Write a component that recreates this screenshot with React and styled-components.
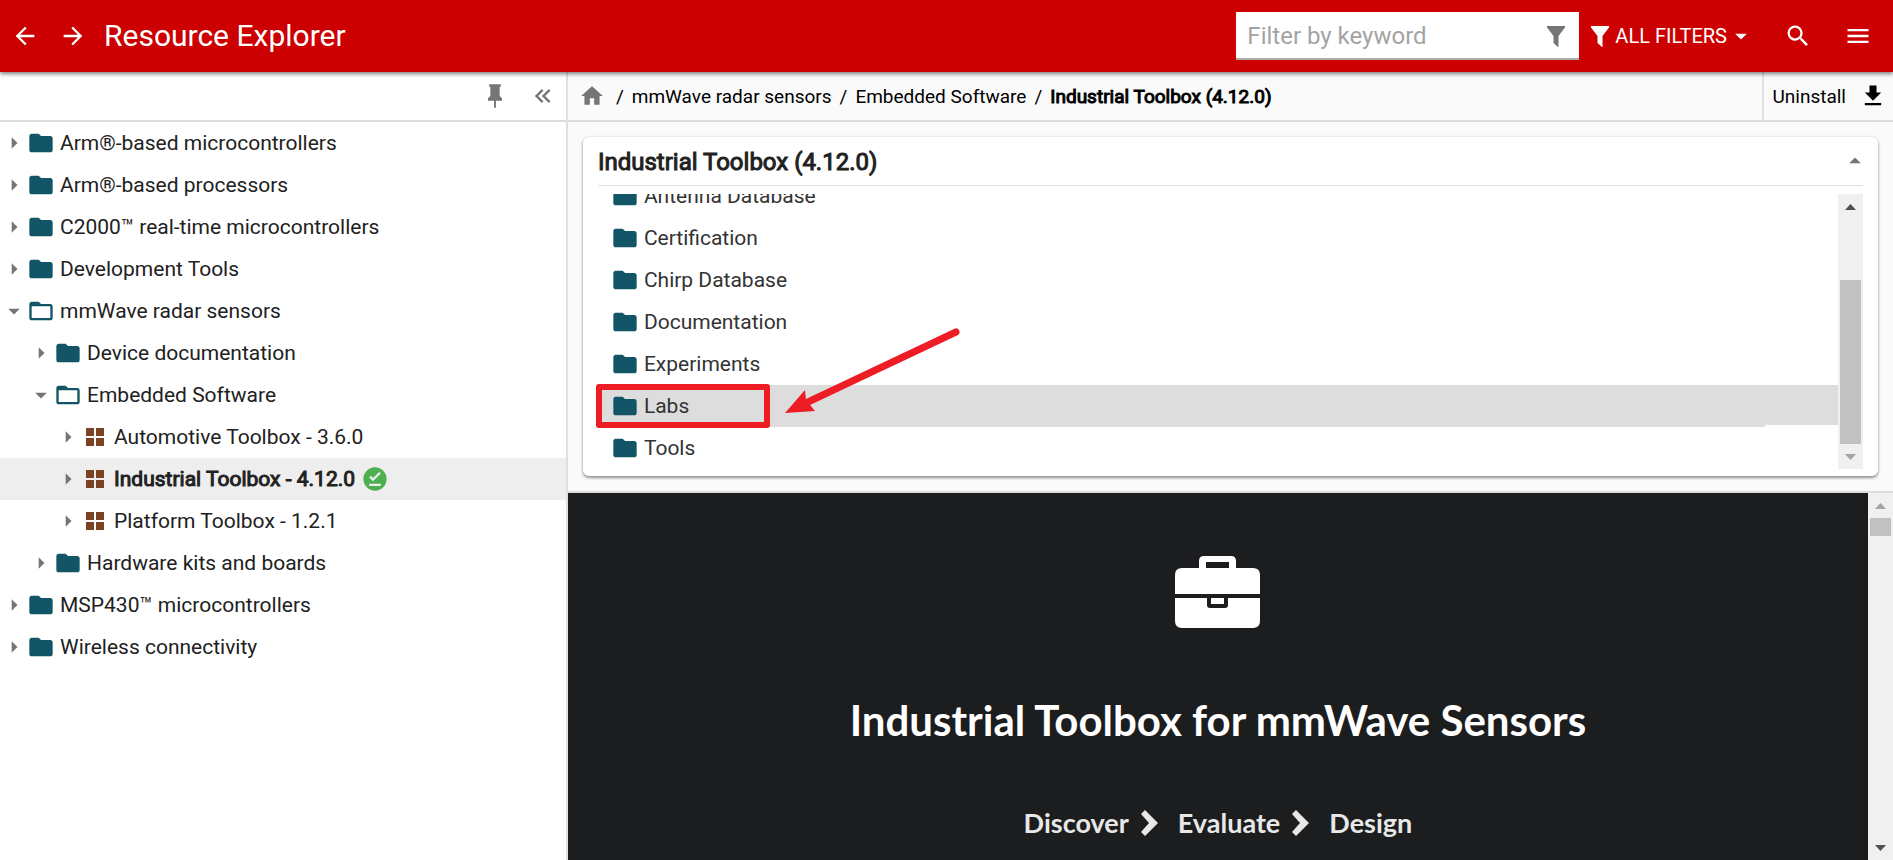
import React from 'react';
import styled, { createGlobalStyle, css } from 'styled-components';
import { MdArrowBack, MdArrowForward, MdSearch, MdMenu, MdHome, MdFileDownload, MdFolder, MdFolderOpen, MdOfflinePin, MdArrowDropDown, MdArrowDropUp, MdArrowRight } from 'react-icons/md';

const GlobalStyle = createGlobalStyle`
  * { box-sizing: border-box; }
  body { margin: 0; font-family: Roboto, sans-serif; font-size: 21px; color: #212121; background: #fff; }
  button, input { font: inherit; color: inherit; }
  h1, h2, p, ul, ol { margin: 0; padding: 0; }
  ul, ol { list-style: none; }
`;

const strong = css`
  font-weight: 400;
  -webkit-text-stroke: 1px currentColor;
`;

const Page = styled.div`
  height: 100vh;
  display: flex;
  flex-direction: column;
  overflow: hidden;
`;

const Header = styled.header`
  position: relative;
  z-index: 2;
  flex: none;
  display: flex;
  align-items: center;
  height: 72px;
  padding: 0 21px 0 11px;
  background: #c00;
  color: #fff;
  box-shadow: 0 2px 4px rgba(0, 0, 0, 0.5);
`;

const IconButton = styled.button`
  display: flex;
  flex: none;
  padding: 0;
  border: 0;
  background: none;
  cursor: pointer;
  svg { width: 28px; height: 28px; }
`;

const NavButtons = styled.div`
  display: flex;
  gap: 20px;
`;

const AppTitle = styled.h1`
  flex: 1;
  padding-left: 17px;
  font-size: 30px;
  line-height: 36px;
  font-weight: 400;
`;

const SearchField = styled.label`
  display: flex;
  align-items: center;
  width: 343px;
  height: 48px;
  padding: 2px 14px 0 11px;
  background: #fff;
  border-bottom: 2px solid #aaa;
  color: #757575;
`;

const SearchInput = styled.input`
  flex: 1;
  min-width: 0;
  padding: 0;
  border: 0;
  outline: 0;
  background: none;
  font-size: 24px;
  &::placeholder { color: #a3a3a3; opacity: 1; }
`;

const FilterButton = styled.button`
  display: flex;
  align-items: center;
  margin: 0 29px 0 12px;
  padding: 0;
  border: 0;
  background: none;
  font-size: 20px;
  line-height: 24px;
  svg:first-child { margin-right: 6px; }
`;

const Tools = styled.div`
  display: flex;
  gap: 32px;
`;

const Body = styled.div`
  flex: 1;
  min-height: 0;
  display: flex;
`;

const Sidebar = styled.nav`
  flex: none;
  width: 30%;
  border-right: 2px solid #e0e0e0;
`;

const SidebarBar = styled.div`
  display: flex;
  justify-content: flex-end;
  align-items: center;
  gap: 20px;
  height: 50px;
  padding-right: 9px;
  border-bottom: 2px solid #dcdcdc;
  color: #757575;
`;

const TreeRow = styled.li`
  display: flex;
  align-items: center;
  height: 42px;
  padding-left: ${(p) => p.$level * 27}px;
  white-space: nowrap;
  ${(p) => p.$selected && css`background: #eee; ${strong}`}
`;

const Caret = styled.button`
  display: flex;
  justify-content: center;
  width: 27px;
  padding: 0;
  border: 0;
  background: none;
  color: #757575;
  svg { flex: none; width: 28px; height: 28px; }
`;

const NodeIcon = styled.span`
  display: flex;
  color: ${(p) => p.$color};
  svg { width: 28px; height: 28px; }
`;

const NodeLink = styled.a`
  padding-left: 5px;
  color: inherit;
  text-decoration: none;
`;

const Installed = styled(NodeIcon)`
  margin-left: 6px;
`;

const Main = styled.main`
  flex: 1;
  min-width: 0;
  display: flex;
  flex-direction: column;
  background: #fafafa;
`;

const Bar = styled.div`
  flex: none;
  display: flex;
  height: 50px;
  border-bottom: 2px solid #dcdcdc;
  font-size: 19px;
  color: #000;
`;

const Crumbs = styled.ol`
  flex: 1;
  display: flex;
  align-items: center;
  padding-left: 11px;
`;

const Crumb = styled.li`
  display: flex;
  &:not(:first-child)::before { content: '/'; padding: 0 8px; }
  &:nth-child(2)::before { padding-left: 11px; }
  a { color: inherit; text-decoration: none; ${(p) => p.$current && strong} }
`;

const HomeLink = styled.a`
  display: flex;
  svg { width: 26px; height: 26px; color: #757575; }
`;

const Uninstall = styled.button`
  display: flex;
  align-items: center;
  gap: 13px;
  padding: 0 6px 0 8px;
  border: 0;
  border-left: 2px solid #e0e0e0;
  background: none;
  svg { width: 28px; height: 28px; }
`;

const Card = styled.section`
  flex: none;
  margin: 15px;
  padding: 0 15px 7px;
  border-radius: 6px;
  background: #fff;
  box-shadow: 0 2px 3px rgba(0, 0, 0, 0.4), 0 0 3px rgba(0, 0, 0, 0.12);
`;

const CardHead = styled.div`
  display: flex;
  align-items: center;
  justify-content: space-between;
  height: 49px;
  border-bottom: 1px solid #e0e0e0;
  color: #757575;
  button { margin-right: -6px; }
`;

const CardTitle = styled.h2`
  padding-top: 2px;
  font-size: 24px;
  line-height: 28px;
  color: #212121;
  ${strong}
`;

const ListArea = styled.div`
  display: flex;
  height: 275px;
  margin-top: 8px;
`;

const FolderList = styled.ul`
  flex: 1;
  display: flex;
  flex-direction: column;
  justify-content: flex-end;
  overflow: hidden;
`;

const FolderRow = styled.li`
  position: relative;
  flex: none;
  display: flex;
  align-items: center;
  height: 42px;
  padding-left: 13px;
  color: #333;
  ${(p) => p.$active && css`
    background: #ddd;
    &::after { content: ''; position: absolute; right: 0; bottom: 0; width: 73px; height: 2px; background: #fff; }
  `}
`;

const ScrollTrack = styled.div`
  flex: none;
  width: 25px;
  display: flex;
  flex-direction: column;
  justify-content: space-between;
  align-items: center;
  background: #f0f0f0;
`;

const ScrollArrow = styled.button`
  display: flex;
  justify-content: center;
  align-items: center;
  width: 25px;
  height: 25px;
  padding: 0;
  border: 0;
  background: none;
  color: ${(p) => (p.$dim ? '#a3a3a3' : '#505050')};
`;

const ThumbLane = styled.div`
  flex: 1;
  display: flex;
  flex-direction: column;
  justify-content: ${(p) => (p.$end ? 'flex-end' : 'flex-start')};
`;

const Thumb = styled.div`
  width: 21px;
  height: ${(p) => p.$length}px;
  background: #c1c1c1;
`;

const Preview = styled.section`
  flex: 1;
  min-height: 0;
  display: flex;
  border-top: 2px solid #dadfde;
`;

const Hero = styled.div`
  flex: 1;
  display: flex;
  flex-direction: column;
  align-items: center;
  padding-top: 63px;
  background: #1c1d1e;
  color: #fff;
  font-family: Lato, sans-serif;
  font-weight: 700;
  overflow: hidden;
`;

const HeroTitle = styled.h2`
  margin-top: 66px;
  font-size: 42px;
  line-height: 52px;
`;

const Steps = styled.p`
  display: flex;
  align-items: center;
  margin-top: 61px;
  font-size: 27px;
  line-height: 32px;
  color: #e8e8e8;
  svg { margin: 0 20px 0 12px; }
`;

const Highlight = styled.span`
  position: absolute;
  left: -2px;
  top: -1px;
  width: 174px;
  height: 44px;
  border: 6px solid #ee1c25;
  border-radius: 3px;
`;

const Pointer = styled.svg`
  position: absolute;
  z-index: 3;
  left: 185px;
  top: -61px;
  width: 180px;
  height: 94px;
`;

const ListFrame = styled.div`
  position: relative;
  flex: 1;
  display: flex;
`;

const Marks = styled.div`
  position: absolute;
  left: 0;
  bottom: 42px;
  height: 42px;
  pointer-events: none;
`;

const FunnelIcon = () => (
  <svg width="18" height="21" viewBox="0 0 18 21" fill="currentColor" aria-hidden="true">
    <path d="M0 0H18V1.500L11.500 10V21H11L6.500 17V10L0 1.500Z" />
  </svg>
);

const PinIcon = () => (
  <svg viewBox="0 0 24 24" fill="currentColor" aria-hidden="true">
    <path d="M16 12V4h1V2H7v2h1v8l-2 2v2h5.2v6h1.6v-6H18v-2l-2-2z" />
  </svg>
);

const CollapseIcon = () => (
  <svg viewBox="0 0 24 24" fill="currentColor" aria-hidden="true">
    <path d="M18.41 7.41 17 6l-6 6 6 6 1.41-1.41L13.83 12zM12.41 7.41 11 6l-6 6 6 6 1.41-1.41L7.83 12z" />
  </svg>
);

const PackageIcon = () => (
  <svg viewBox="0 0 28 28" fill="currentColor" aria-hidden="true">
    <path d="M5 5h8v8H5zM15 5h8v8h-8zM5 15h8v8H5zM15 15h8v8h-8z" />
  </svg>
);

const BriefcaseIcon = () => (
  <svg width="85" height="72" viewBox="0 0 85 72" fill="#fff" aria-hidden="true">
    <path d="M24 12V5q0-5 5-5h27q5 0 5 5v7h17q7 0 7 7v19H0V19q0-7 7-7zM31 12h23V6H31z" fillRule="evenodd" />
    <path d="M0 42h32v7q0 3 3 3h15q3 0 3-3v-7h32v23q0 7-7 7H7q-7 0-7-7zM36 42h13v6H36z" />
  </svg>
);

const StepArrow = () => (
  <svg width="17" height="26" viewBox="0 0 17 26" fill="currentColor" aria-hidden="true">
    <path d="M4 0 17 13 4 26 0 22 8 13 0 4Z" />
  </svg>
);

const Triangle = ({ up }) => (
  <svg width="11" height="6" viewBox="0 0 11 6" fill="currentColor" aria-hidden="true">
    <path d={up ? 'M5.500 0 11 6H0Z' : 'M0 0H11L5.500 6Z'} />
  </svg>
);

const tree = [
  { label: 'Arm®-based microcontrollers', level: 0 },
  { label: 'Arm®-based processors', level: 0 },
  { label: 'C2000™ real-time microcontrollers', level: 0 },
  { label: 'Development Tools', level: 0 },
  { label: 'mmWave radar sensors', level: 0, open: true },
  { label: 'Device documentation', level: 1 },
  { label: 'Embedded Software', level: 1, open: true },
  { label: 'Automotive Toolbox - 3.6.0', level: 2, pkg: true },
  { label: 'Industrial Toolbox - 4.12.0', level: 2, pkg: true, selected: true },
  { label: 'Platform Toolbox - 1.2.1', level: 2, pkg: true },
  { label: 'Hardware kits and boards', level: 1 },
  { label: 'MSP430™ microcontrollers', level: 0 },
  { label: 'Wireless connectivity', level: 0 },
];

const folders = ['Antenna Database', 'Certification', 'Chirp Database', 'Documentation', 'Experiments', 'Labs', 'Tools'];

function TreeNode({ label, level, open, pkg, selected }) {
  return (
    <TreeRow $level={level} $selected={selected}>
      <Caret aria-label={`Toggle ${label}`}>{open ? <MdArrowDropDown /> : <MdArrowRight />}</Caret>
      <NodeIcon $color={pkg ? '#7a4424' : '#115566'}>
        {pkg ? <PackageIcon /> : open ? <MdFolderOpen /> : <MdFolder />}
      </NodeIcon>
      <NodeLink href="#">{label}</NodeLink>
      {selected && <Installed $color="#4caf50"><MdOfflinePin /></Installed>}
    </TreeRow>
  );
}

function Scrollbar({ length, end, dimUp, dimDown }) {
  return (
    <ScrollTrack>
      <ScrollArrow $dim={dimUp} aria-label="Scroll up"><Triangle up /></ScrollArrow>
      <ThumbLane $end={end}><Thumb $length={length} /></ThumbLane>
      <ScrollArrow $dim={dimDown} aria-label="Scroll down"><Triangle /></ScrollArrow>
    </ScrollTrack>
  );
}

export default function App() {
  return (
    <Page>
      <GlobalStyle />
      <Header>
        <NavButtons>
          <IconButton aria-label="Back"><MdArrowBack /></IconButton>
          <IconButton aria-label="Forward"><MdArrowForward /></IconButton>
        </NavButtons>
        <AppTitle>Resource Explorer</AppTitle>
        <SearchField>
          <SearchInput type="text" placeholder="Filter by keyword" aria-label="Filter by keyword" />
          <FunnelIcon />
        </SearchField>
        <FilterButton>
          <FunnelIcon />
          ALL FILTERS
          <MdArrowDropDown size={28} />
        </FilterButton>
        <Tools>
          <IconButton aria-label="Search"><MdSearch /></IconButton>
          <IconButton aria-label="Menu"><MdMenu /></IconButton>
        </Tools>
      </Header>
      <Body>
        <Sidebar>
          <SidebarBar>
            <IconButton aria-label="Pin"><PinIcon /></IconButton>
            <IconButton aria-label="Collapse"><CollapseIcon /></IconButton>
          </SidebarBar>
          <ul>
            {tree.map((node) => <TreeNode key={node.label} {...node} />)}
          </ul>
        </Sidebar>
        <Main>
          <Bar>
            <Crumbs>
              <Crumb><HomeLink href="#" aria-label="Home"><MdHome /></HomeLink></Crumb>
              <Crumb><a href="#">mmWave radar sensors</a></Crumb>
              <Crumb><a href="#">Embedded Software</a></Crumb>
              <Crumb $current><a href="#">Industrial Toolbox (4.12.0)</a></Crumb>
            </Crumbs>
            <Uninstall>Uninstall<MdFileDownload /></Uninstall>
          </Bar>
          <Card>
            <CardHead>
              <CardTitle>Industrial Toolbox (4.12.0)</CardTitle>
              <IconButton aria-label="Collapse section"><MdArrowDropUp /></IconButton>
            </CardHead>
            <ListArea>
              <ListFrame>
                <FolderList>
                  {folders.map((name) => (
                    <FolderRow key={name} $active={name === 'Labs'}>
                      <NodeIcon $color="#115566"><MdFolder /></NodeIcon>
                      <NodeLink href="#">{name}</NodeLink>
                    </FolderRow>
                  ))}
                </FolderList>
                <Marks>
                  <Highlight />
                  <Pointer viewBox="0 0 180 94" aria-hidden="true">
                    <path d="M173 8 25 78" stroke="#ee1c25" strokeWidth="7" strokeLinecap="round" />
                    <path d="M2 89 22 66 23 76 32 87Z" fill="#ee1c25" />
                  </Pointer>
                </Marks>
              </ListFrame>
              <Scrollbar length={164} end dimDown />
            </ListArea>
          </Card>
          <Preview>
            <Hero>
              <BriefcaseIcon />
              <HeroTitle>Industrial Toolbox for mmWave Sensors</HeroTitle>
              <Steps>Discover<StepArrow />Evaluate<StepArrow />Design</Steps>
            </Hero>
            <Scrollbar length={18} dimUp />
          </Preview>
        </Main>
      </Body>
    </Page>
  );
}
